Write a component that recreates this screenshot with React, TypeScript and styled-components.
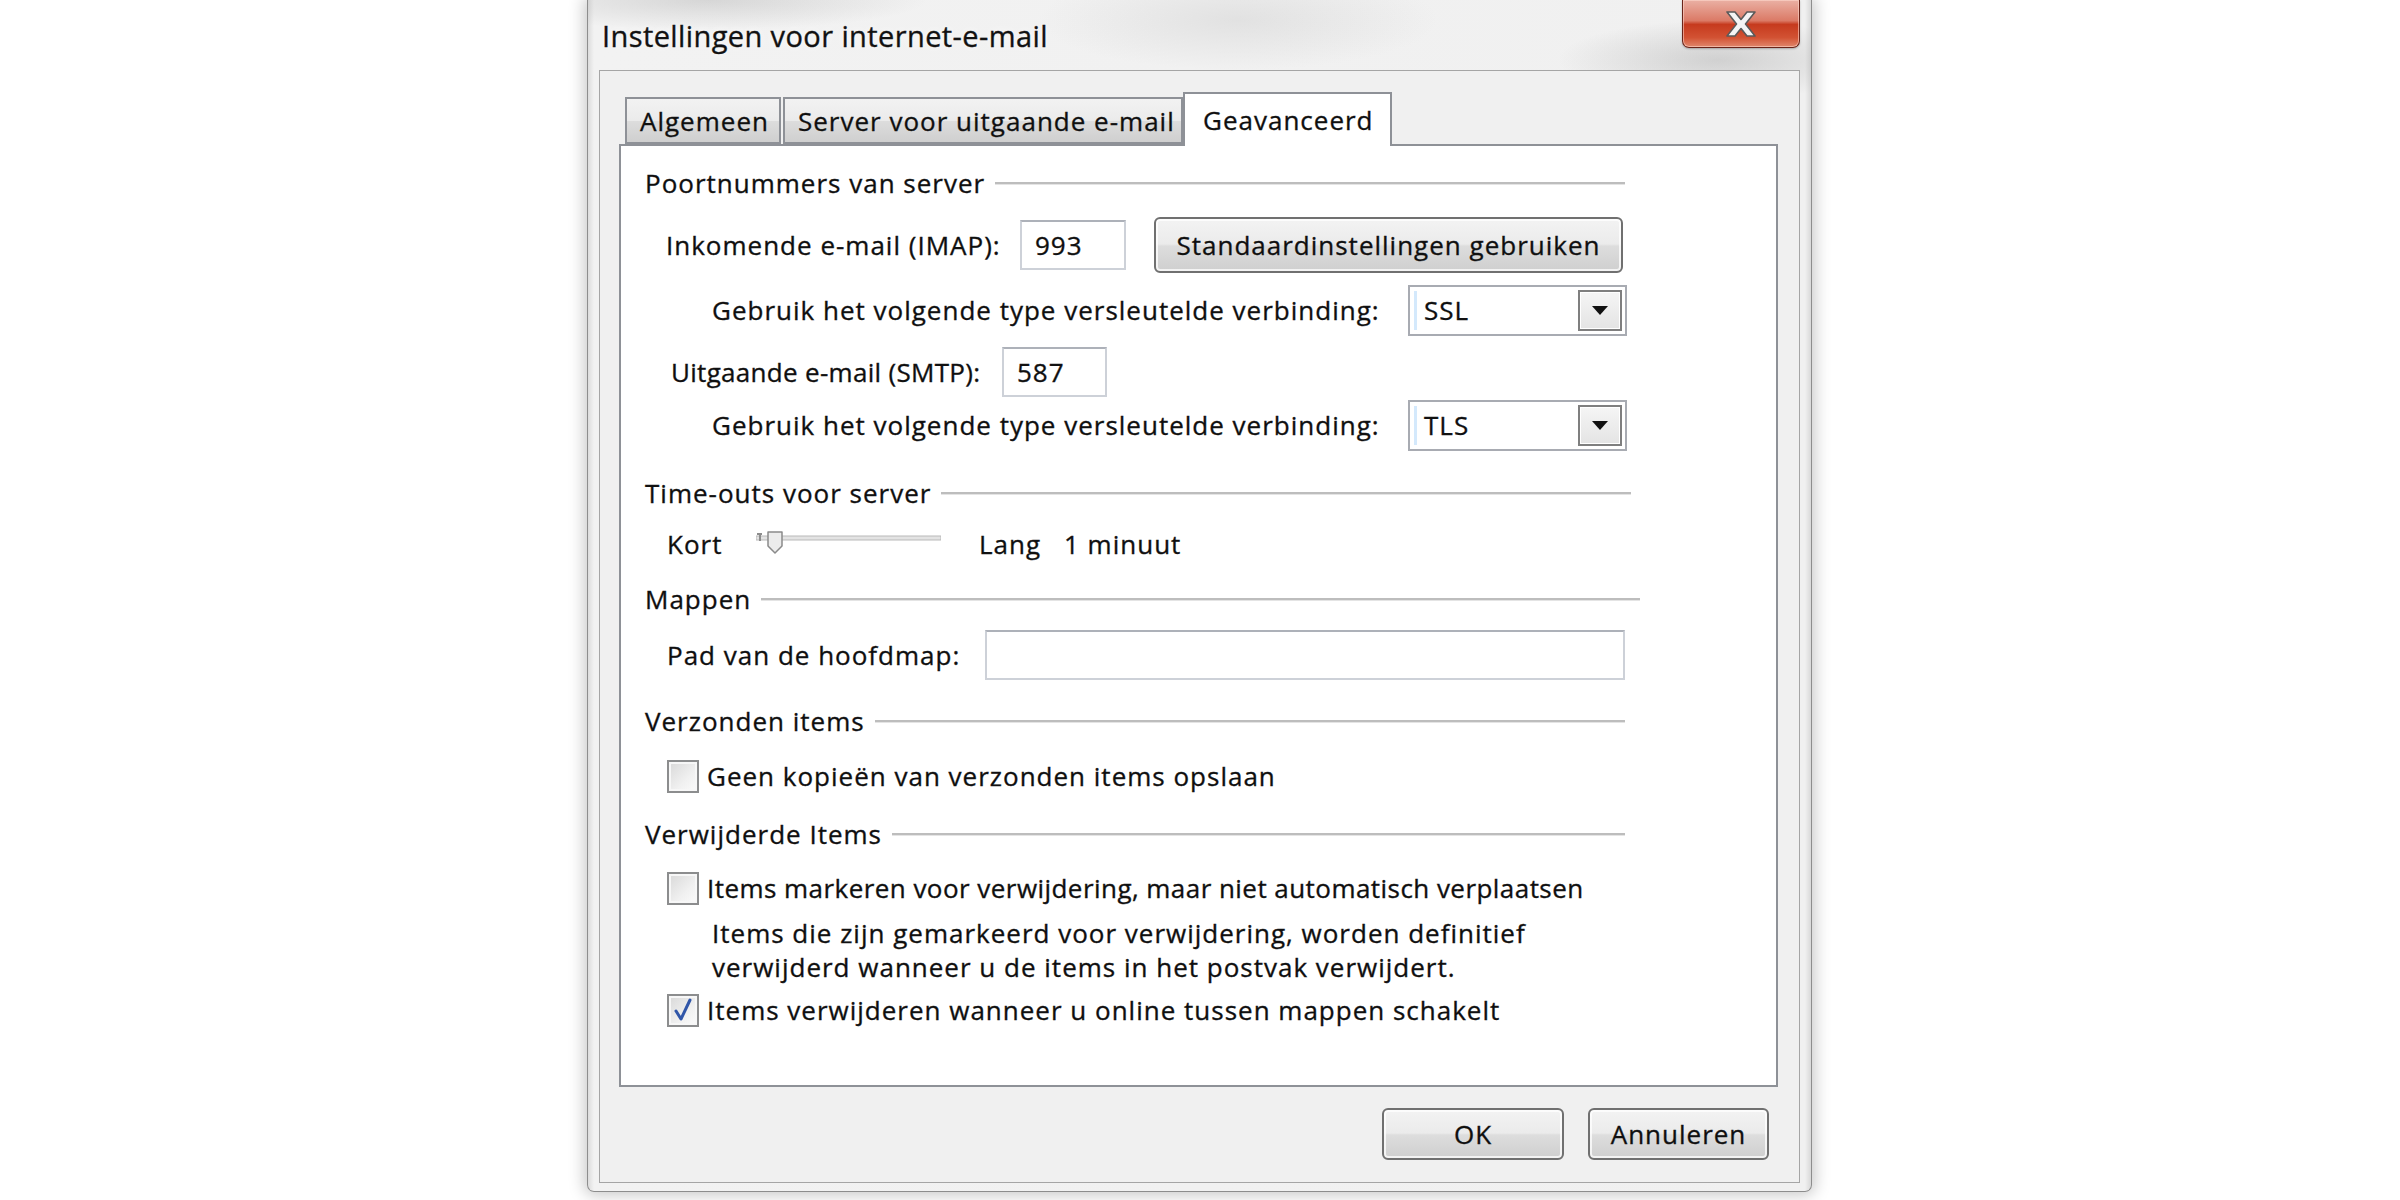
import React from 'react'
import styled, { createGlobalStyle } from 'styled-components'

const GlobalStyle = createGlobalStyle`
  html, body {
    margin: 0;
    padding: 0;
    background: #ffffff;
  }
  body {
    font-family: "Open Sans", "Noto Sans", sans-serif;
    color: #0e0e0e;
    -webkit-text-stroke: 0.35px #1a1a1a;
  }
`

const Page = styled.div`
  width: 2400px;
  height: 1200px;
  background: #ffffff;
  display: flex;
  overflow: hidden;
`

const Window = styled.div`
  margin-left: 587px;
  width: 1225px;
  height: 1192px;
  box-sizing: border-box;
  display: flex;
  flex-direction: column;
  padding: 0 11px 8px 11px;
  border: 1px solid #8d8d8d;
  border-top: none;
  border-radius: 0 0 7px 7px;
  background:
    radial-gradient(ellipse 160px 40px at 1130px 60px, rgba(150, 150, 150, 0.35), transparent),
    radial-gradient(ellipse 220px 30px at 120px 0px, rgba(150, 150, 150, 0.3), transparent),
    radial-gradient(ellipse 200px 50px at 650px 20px, rgba(190, 190, 190, 0.3), transparent),
    linear-gradient(90deg, #dcdcdc 0px, #f2f2f2 6px, #f0f0f0 calc(100% - 6px), #d8d8d8 100%);
  box-shadow: 0 0 16px 3px rgba(0, 0, 0, 0.22);
`

const TitleBar = styled.div`
  height: 70px;
  flex: none;
  display: flex;
  justify-content: space-between;
  align-items: flex-start;
`

const Title = styled.div`
  align-self: center;
  margin-left: 3px;
  font-size: 29px;
  letter-spacing: 0.4px;
  color: #111;
  text-shadow: 0 0 8px rgba(255, 255, 255, 0.9);
`

const CloseButton = styled.div`
  width: 118px;
  height: 48px;
  box-sizing: border-box;
  border: 1px solid #6a2419;
  border-top: none;
  border-radius: 0 0 7px 7px;
  background: linear-gradient(180deg, #eab0a4 0%, #db7a66 44%, #c63a1e 52%, #d25233 80%, #e0876c 100%);
  box-shadow: inset 0 0 0 1px rgba(255, 220, 210, 0.55), 0 1px 2px rgba(0, 0, 0, 0.25);
  display: flex;
  align-items: center;
  justify-content: center;
`

const Client = styled.div`
  flex: 1;
  box-sizing: border-box;
  display: flex;
  flex-direction: column;
  background: #f0f0f0;
  border: 1px solid #a5a5a5;
  padding: 21px 21px 22px 19px;
`

const TabStrip = styled.div`
  height: 52px;
  flex: none;
  display: flex;
  align-items: flex-end;
  padding-left: 6px;
  gap: 2px;
  position: relative;
  z-index: 1;
`

const Tab = styled.div<{ $w: number; $active?: boolean }>`
  width: ${p => p.$w}px;
  height: ${p => (p.$active ? 54 : 47)}px;
  margin-bottom: ${p => (p.$active ? -2 : 0)}px;
  margin-left: ${p => (p.$active ? -2 : 0)}px;
  box-sizing: border-box;
  border: 2px solid #8e9197;
  border-bottom: ${p => (p.$active ? 'none' : '2px solid #8e9197')};
  background: ${p => (p.$active ? '#ffffff' : 'linear-gradient(180deg, #f2f2f2 0%, #ebebeb 50%, #dddddd 51%, #cfcfcf 100%)')};
  display: flex;
  align-items: ${p => (p.$active ? 'flex-start' : 'center')};
  padding: ${p => (p.$active ? '8px 0 0 18px' : '0 0 0 13px')};
  font-size: 26px;
  letter-spacing: 1px;
  white-space: nowrap;
`

const Panel = styled.div`
  flex: none;
  height: 943px;
  box-sizing: border-box;
  background: #ffffff;
  border: 2px solid #8e9197;
  padding: 17px 151px 0 24px;
  display: flex;
  flex-direction: column;
`

const Row = styled.div<{ $top?: number; $indent?: number; $h?: number }>`
  height: ${p => p.$h ?? 40}px;
  margin-top: ${p => p.$top ?? 0}px;
  padding-left: ${p => p.$indent ?? 0}px;
  display: flex;
  align-items: center;
  font-size: 26px;
  letter-spacing: 1px;
  white-space: nowrap;
`

const GroupLine = styled.div<{ $extend?: number }>`
  flex: 1;
  margin-left: 10px;
  margin-right: ${p => -(p.$extend ?? 0)}px;
  height: 2px;
  background: #bdbdbd;
  border-bottom: 1px solid #e4e4e4;
`

const Label = styled.span<{ $w?: number; $ls?: number }>`
  display: inline-block;
  width: ${p => (p.$w ? `${p.$w}px` : 'auto')};
  letter-spacing: ${p => p.$ls ?? 1}px;
  flex: none;
`

const TextBox = styled.div<{ $w?: number }>`
  width: ${p => (p.$w ? `${p.$w}px` : 'auto')};
  flex: ${p => (p.$w ? 'none' : '1')};
  height: 50px;
  box-sizing: border-box;
  border: 2px solid #cdd1d8;
  border-top-color: #adb1b9;
  background: #ffffff;
  display: flex;
  align-items: center;
  padding-left: 13px;
`

const PushButton = styled.div<{ $w: number; $h?: number }>`
  width: ${p => p.$w}px;
  height: ${p => p.$h ?? 52}px;
  flex: none;
  box-sizing: border-box;
  border: 2px solid #707070;
  border-radius: 6px;
  background: linear-gradient(180deg, #f3f3f3 0%, #ebebeb 48%, #dddddd 52%, #cfcfcf 100%);
  box-shadow: inset 0 0 0 2px rgba(255, 255, 255, 0.75);
  display: flex;
  align-items: center;
  justify-content: center;
  font-size: 26px;
  letter-spacing: 1px;
  white-space: nowrap;
`

const Select = styled.div`
  width: 219px;
  height: 51px;
  flex: none;
  box-sizing: border-box;
  border: 2px solid #a8abb2;
  background: #ffffff;
  display: flex;
  align-items: center;
  padding: 0 3px 0 4px;
`

const SelectValue = styled.div`
  flex: 1;
  height: 39px;
  display: flex;
  align-items: center;
  padding-left: 7px;
  border-left: 3px solid #d4e9fc;
`

const DropArrow = styled.div`
  width: 44px;
  height: 41px;
  box-sizing: border-box;
  border: 2px solid #7f7f7f;
  background: linear-gradient(180deg, #f5f5f5 0%, #e4e4e4 100%);
  box-shadow: inset 0 0 0 1px #ffffff;
  display: flex;
  align-items: center;
  justify-content: center;
`

const Checkbox = styled.div`
  width: 32px;
  height: 33px;
  flex: none;
  box-sizing: border-box;
  border: 2px solid #8c8d8e;
  background: linear-gradient(135deg, #d8d8d8 0%, #f0f0f0 60%, #fbfbfb 100%);
  box-shadow: inset 0 0 0 2px #f7f7f7;
  margin-right: 8px;
  display: flex;
  align-items: center;
  justify-content: center;
`

const Description = styled.div`
  height: 68px;
  margin-top: 8px;
  padding-left: 67px;
  font-size: 26px;
  letter-spacing: 1px;
  line-height: 34px;
  white-space: nowrap;
`

const ButtonRow = styled.div`
  height: 52px;
  margin-top: 21px;
  flex: none;
  display: flex;
  justify-content: flex-end;
  gap: 24px;
  padding-right: 9px;
`

const Spacer = styled.div<{ $w: number }>`
  width: ${p => p.$w}px;
  flex: none;
`

const GroupHeader = ({ title, extend }: { title: string; extend?: number }) => (
  <>
    <Label>{title}</Label>
    <GroupLine $extend={extend} />
  </>
)

const CloseGlyph = () => (
  <svg width="34" height="30" viewBox="-17 -15 34 30">
    <path
      d="M-14,-12 L-6,-12 L0,-4.5 L6,-12 L14,-12 L4.5,0 L14,12 L6,12 L0,4.5 L-6,12 L-14,12 L-4.5,0 Z"
      fill="#f4f4f4"
      stroke="#5a5a5a"
      strokeWidth="1.6"
      strokeLinejoin="round"
    />
  </svg>
)

const ArrowGlyph = () => (
  <svg width="16" height="9" viewBox="0 0 16 9">
    <path d="M0,0 L16,0 L8,9 Z" fill="#111" />
  </svg>
)

const CheckGlyph = () => (
  <svg width="24" height="26" viewBox="0 0 24 26">
    <path d="M5,14 L10,22 L19,3" fill="none" stroke="#3056a8" strokeWidth="3" strokeLinecap="round" strokeLinejoin="round" />
  </svg>
)

const TimeoutSlider = () => (
  <svg width="185" height="30" viewBox="0 0 185 30">
    <rect x="0" y="7" width="185" height="4" fill="#e3e3e3" stroke="#b9b9b9" strokeWidth="1" />
    <path d="M1,5 L6,5 M4,5 L4,12" stroke="#8d8d8d" strokeWidth="2" fill="none" />
    <path d="M12,3 L26,3 L26,17 L19,24 L12,17 Z" fill="#ececec" stroke="#8a8a8a" strokeWidth="1.5" strokeLinejoin="round" />
  </svg>
)

export default function App() {
  return (
    <Page>
      <GlobalStyle />
      <Window>
        <TitleBar>
          <Title>Instellingen voor internet-e-mail</Title>
          <CloseButton>
            <CloseGlyph />
          </CloseButton>
        </TitleBar>
        <Client>
          <TabStrip>
            <Tab $w={156}>Algemeen</Tab>
            <Tab $w={400}>Server voor uitgaande e-mail</Tab>
            <Tab $w={209} $active>Geavanceerd</Tab>
          </TabStrip>
          <Panel>
            <Row>
              <GroupHeader title="Poortnummers van server" />
            </Row>
            <Row $top={22} $indent={21}>
              <Label $w={354}>Inkomende e-mail (IMAP):</Label>
              <TextBox $w={106}>993</TextBox>
              <Spacer $w={28} />
              <PushButton $w={469} $h={56}>Standaardinstellingen gebruiken</PushButton>
            </Row>
            <Row $top={25} $indent={67}>
              <Label $w={696}>Gebruik het volgende type versleutelde verbinding:</Label>
              <Select>
                <SelectValue>SSL</SelectValue>
                <DropArrow>
                  <ArrowGlyph />
                </DropArrow>
              </Select>
            </Row>
            <Row $top={22} $indent={26}>
              <Label $w={331} $ls={0.3}>Uitgaande e-mail (SMTP):</Label>
              <TextBox $w={105}>587</TextBox>
            </Row>
            <Row $top={13} $indent={67}>
              <Label $w={696}>Gebruik het volgende type versleutelde verbinding:</Label>
              <Select>
                <SelectValue>TLS</SelectValue>
                <DropArrow>
                  <ArrowGlyph />
                </DropArrow>
              </Select>
            </Row>
            <Row $top={28}>
              <GroupHeader title="Time-outs voor server" extend={6} />
            </Row>
            <Row $top={11} $indent={22}>
              <Label $w={89}>Kort</Label>
              <TimeoutSlider />
              <Spacer $w={38} />
              <Label $w={85}>Lang</Label>
              <Label>1 minuut</Label>
            </Row>
            <Row $top={15}>
              <GroupHeader title="Mappen" extend={15} />
            </Row>
            <Row $top={16} $indent={22}>
              <Label $w={318}>Pad van de hoofdmap:</Label>
              <TextBox />
            </Row>
            <Row $top={26}>
              <GroupHeader title="Verzonden items" />
            </Row>
            <Row $top={15} $indent={22}>
              <Checkbox />
              <Label>Geen kopieën van verzonden items opslaan</Label>
            </Row>
            <Row $top={18}>
              <GroupHeader title="Verwijderde Items" />
            </Row>
            <Row $top={14} $indent={22}>
              <Checkbox />
              <Label $ls={0.45}>Items markeren voor verwijdering, maar niet automatisch verplaatsen</Label>
            </Row>
            <Description>
              Items die zijn gemarkeerd voor verwijdering, worden definitief
              <br />
              verwijderd wanneer u de items in het postvak verwijdert.
            </Description>
            <Row $top={6} $indent={22}>
              <Checkbox>
                <CheckGlyph />
              </Checkbox>
              <Label>Items verwijderen wanneer u online tussen mappen schakelt</Label>
            </Row>
          </Panel>
          <ButtonRow>
            <PushButton $w={182}>OK</PushButton>
            <PushButton $w={181}>Annuleren</PushButton>
          </ButtonRow>
        </Client>
      </Window>
    </Page>
  )
}
